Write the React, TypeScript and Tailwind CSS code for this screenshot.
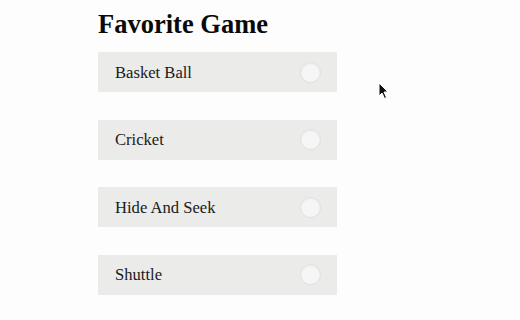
const games = ["Basket Ball", "Cricket", "Hide And Seek", "Shuttle"];

function Cursor() {
  return (
    <svg
      className="absolute left-[378px] top-[82px]"
      width="12"
      height="18"
      viewBox="0 0 12 18"
      aria-hidden="true"
    >
      <path d="M1 1 L1 14 L4 11 L6.5 16.5 L8.5 15.5 L6 10 L10 10 Z" fill="#111" stroke="#fff" strokeWidth="1" />
    </svg>
  );
}

export default function App() {
  return (
    <div className="relative w-[520px] h-[320px] bg-[#fdfdfd] font-['Liberation_Serif',serif] text-[#1a1a1a]">
      <div className="pl-[98px] pt-[8px]">
        <h1 className="text-[26.5px] font-bold leading-[32px] text-[#0a0a0a]">Favorite Game</h1>
        <div className="mt-[12px] flex flex-col gap-[27.5px]">
          {games.map((g) => (
            <label
              key={g}
              className="flex h-[40px] w-[239px] items-center justify-between bg-[#ebebea] pl-[17px] pr-[16px]"
            >
              <span className="pt-[2px] text-[16.6px]">{g}</span>
              <span className="h-[21px] w-[21px] rounded-full border border-[#e0e0e0] bg-[#f6f6f6] shadow-[inset_0_1px_2px_rgba(0,0,0,0.05)]" />
            </label>
          ))}
        </div>
      </div>
      <Cursor />
    </div>
  );
}
